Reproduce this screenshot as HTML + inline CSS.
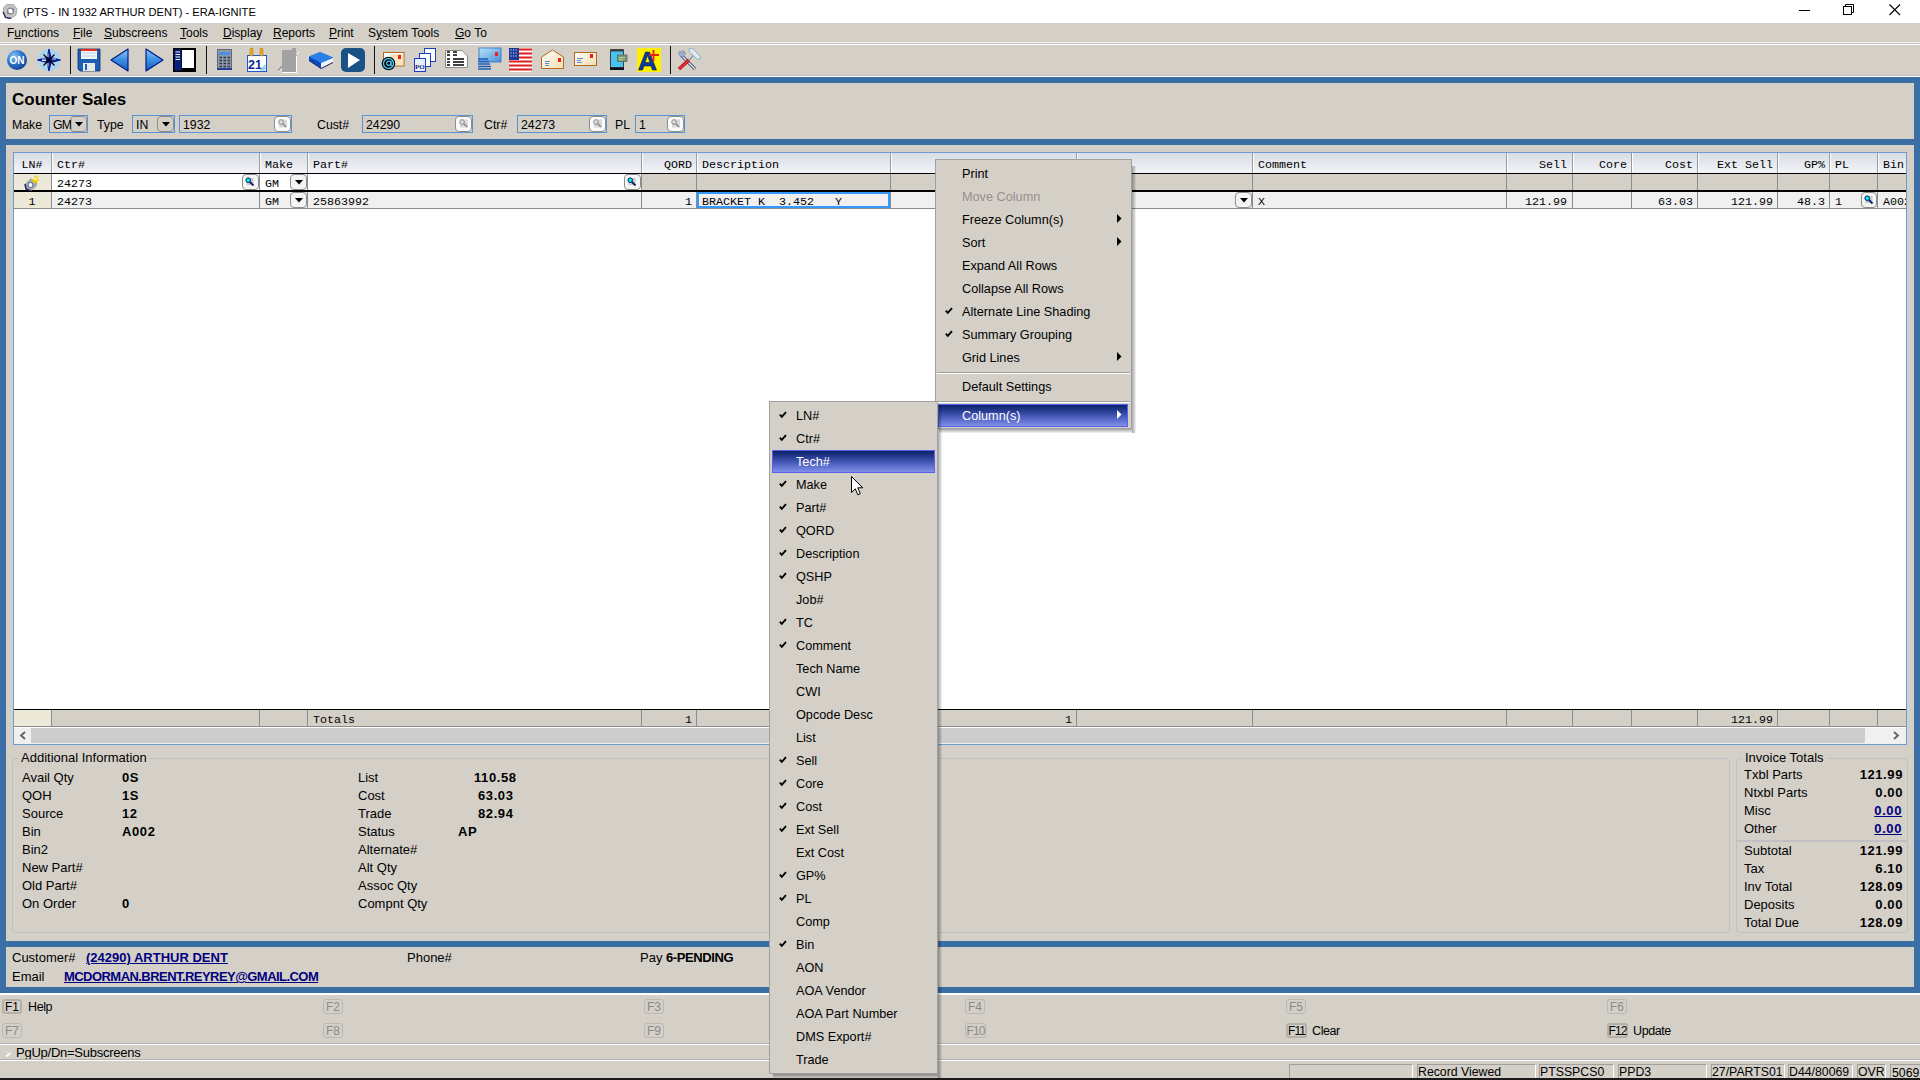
<!DOCTYPE html>
<html><head><meta charset="utf-8">
<style>
*{margin:0;padding:0;box-sizing:border-box}
html,body{width:1920px;height:1080px;overflow:hidden;background:#d4d0c8;font-family:"Liberation Sans",sans-serif;font-size:13px;color:#000}
.a{position:absolute}
.t{position:absolute;white-space:pre;line-height:1}
.mono{font-family:"Liberation Mono",monospace}
.ser{font-family:"Liberation Serif",serif;font-weight:bold}
.bl{background:#3a6ea5}
.panel{background:#d4d0c8}
u{text-decoration:underline;text-underline-offset:1px}
</style></head><body>
<!-- TITLE BAR -->
<div class="a" style="left:0;top:0;width:1920px;height:23px;background:#fff"></div>
<svg class="a" style="left:2px;top:3px" width="16" height="16" viewBox="0 0 16 16"><path d="M5 1.5L11.5 1.5L15 6L14 12L9 15.5L3.5 14.5L1 9L2 4Z" fill="#c4c4c4" stroke="#9a9a9a" stroke-width="0.8"/><path d="M1.2 9L3.5 14.5L9 15.5" fill="none" stroke="#2a2a5a" stroke-width="1.4"/><circle cx="8.5" cy="8" r="3.6" fill="#8a8a8a"/><rect x="6.5" y="6" width="4" height="4" fill="#fff"/><circle cx="11" cy="6.5" r="0.8" fill="#3a6a9a"/><circle cx="6" cy="10" r="0.8" fill="#3a6a9a"/></svg>
<div class="t" style="left:23px;top:6.5px;font-size:11.1px">(PTS - IN 1932 ARTHUR DENT) - ERA-IGNITE</div>
<div class="a" style="left:1799px;top:10px;width:11px;height:1px;background:#000"></div>
<svg class="a" style="left:1843px;top:4px" width="12" height="12" viewBox="0 0 12 12"><rect x="0.5" y="2.5" width="8" height="8" fill="none" stroke="#000"/><path d="M2.5 2.5V0.5H10.5V8.5H8.5" fill="none" stroke="#000"/></svg>
<svg class="a" style="left:1889px;top:4px" width="12" height="12" viewBox="0 0 12 12"><path d="M0.5 0.5L11 11M11 0.5L0.5 11" stroke="#000" stroke-width="1.1"/></svg>

<!-- MENU BAR -->
<div class="a" style="left:0;top:23px;width:1920px;height:19px;background:#d4d0c8"></div>
<div class="a" style="left:0;top:42px;width:1920px;height:1px;background:#f2f2f2"></div>
<div class="a" style="left:0;top:43px;width:1920px;height:1px;background:#c0c0c0"></div>
<div class="a" style="left:0;top:44px;width:1920px;height:1px;background:#fff"></div>
<div class="t" style="left:7px;top:27px;font-size:12px">F<u>u</u>nctions</div>
<div class="t" style="left:73px;top:27px;font-size:12px"><u>F</u>ile</div>
<div class="t" style="left:104px;top:27px;font-size:12px"><u>S</u>ubscreens</div>
<div class="t" style="left:180px;top:27px;font-size:12px"><u>T</u>ools</div>
<div class="t" style="left:223px;top:27px;font-size:12px"><u>D</u>isplay</div>
<div class="t" style="left:273px;top:27px;font-size:12px"><u>R</u>eports</div>
<div class="t" style="left:329px;top:27px;font-size:12px"><u>P</u>rint</div>
<div class="t" style="left:368px;top:27px;font-size:12px">S<u>y</u>stem Tools</div>
<div class="t" style="left:455px;top:27px;font-size:12px"><u>G</u>o To</div>

<!-- TOOLBAR -->
<svg class="a" style="left:0;top:44px" width="720" height="32" viewBox="0 44 720 32">
<defs>
<radialGradient id="gOn" cx="0.35" cy="0.3" r="0.8"><stop offset="0" stop-color="#8cc4f4"/><stop offset="0.5" stop-color="#2a74cc"/><stop offset="1" stop-color="#0c3c8c"/></radialGradient>
<linearGradient id="gArr" x1="0" y1="0" x2="0" y2="1"><stop offset="0" stop-color="#8cc8f8"/><stop offset="0.5" stop-color="#3c8ee0"/><stop offset="1" stop-color="#1a5cb8"/></linearGradient>
<linearGradient id="gEnv" x1="0" y1="0" x2="1" y2="1"><stop offset="0" stop-color="#fffef8"/><stop offset="1" stop-color="#f4ddb0"/></linearGradient>
<linearGradient id="gBenv" x1="0" y1="0" x2="1" y2="1"><stop offset="0" stop-color="#b8e4fc"/><stop offset="1" stop-color="#4a90d8"/></linearGradient>
</defs>
<!-- ON -->
<circle cx="17" cy="60" r="10" fill="url(#gOn)"/>
<text x="17" y="64" font-family="Liberation Sans" font-weight="bold" font-size="10" fill="#fff" text-anchor="middle">ON</text>
<!-- compass -->
<circle cx="49" cy="60" r="11" fill="#a8d4f4"/>
<path d="M49 49L51 57.5L60.5 60L51 62.5L49 71L47 62.5L37.5 60L47 57.5Z" fill="#0a1a8a" stroke="#0a1a8a" stroke-width="1"/>
<path d="M43.5 54.5L54.5 65.5M54.5 54.5L43.5 65.5" stroke="#000" stroke-width="1.2"/>
<path d="M48 53.5V57M48 63V66.5M42 59H46M52 59H56M42 60.5H46" stroke="#fff" stroke-width="0.9"/>
<rect x="70" y="46" width="1" height="28" fill="#111"/>
<!-- floppy -->
<path d="M78 49H100V71H80L78 69Z" fill="#1d5fb4" stroke="#0c2c74" stroke-width="0.8"/>
<rect x="81" y="49" width="16" height="10" fill="#f4f4f4"/>
<rect x="81" y="49" width="16" height="2" fill="#e83020"/>
<path d="M82 53H96M82 56H96" stroke="#a8c8e8" stroke-width="0.8"/>
<rect x="83" y="63" width="12" height="8" fill="#e8e8e8"/>
<rect x="85" y="64" width="2" height="6" fill="#1d5fb4"/>
<!-- left arrow -->
<path d="M111 60L128 49V71Z" fill="url(#gArr)" stroke="#001a8a" stroke-width="1.2" stroke-linejoin="round"/>
<!-- right arrow -->
<path d="M163 60L146 49V71Z" fill="url(#gArr)" stroke="#001a8a" stroke-width="1.2" stroke-linejoin="round"/>
<!-- panel book -->
<rect x="173" y="48" width="23" height="24" fill="#000"/>
<rect x="174.5" y="49.5" width="7" height="21" fill="#0a1e7c"/>
<rect x="182" y="50" width="12" height="18" fill="#fff"/>
<path d="M175.5 52H180M175.5 54.5H180M175.5 57H180M175.5 59.5H180" stroke="#fff" stroke-width="1.2"/>
<rect x="206" y="46" width="1" height="28" fill="#111"/>
<!-- calculator -->
<rect x="217" y="49" width="15" height="21" fill="#5c6a7c"/>
<rect x="218" y="50" width="13" height="19" fill="#8e9aa8"/>
<rect x="219" y="52" width="11" height="3" fill="#4a8ee0"/>
<path d="M219.5 57.5H222M223.5 57.5H226M227.5 57.5H230M219.5 60.5H222M223.5 60.5H226M227.5 60.5H230M219.5 63.5H222M223.5 63.5H226M227.5 63.5H230M219.5 66.5H222M223.5 66.5H226M227.5 66.5H230" stroke="#2a3444" stroke-width="1.6"/>
<rect x="217" y="68" width="15" height="2" fill="#2a3a9a"/>
<!-- calendar -->
<rect x="247.5" y="55.5" width="19" height="16" fill="#fff" stroke="#1a5ad0" stroke-width="1"/>
<rect x="250" y="48" width="3" height="8" rx="1.2" fill="#e8a820" stroke="#b07810" stroke-width="0.5"/>
<rect x="260" y="48" width="3" height="8" rx="1.2" fill="#e8a820" stroke="#b07810" stroke-width="0.5"/>
<text x="248" y="69" font-family="Liberation Sans" font-weight="bold" font-size="12.5" fill="#0a2a98">21</text>
<path d="M259 70.5L265.5 64V70.5Z" fill="#9cc8f0"/>
<!-- gray doc -->
<path d="M282 50H292V48H296V53L299.5 50.5V52.5L296 56V72H282Z" fill="#a2a2a2"/>
<path d="M296.5 56V72.5H282" fill="none" stroke="#fff" stroke-width="1"/>
<path d="M296.5 54.5L299.5 51.5" stroke="#fff" stroke-width="1.2"/>
<path d="M278 70.5L282 66.5" stroke="#8a8a8a" stroke-width="1.3"/>
<path d="M279 71.5L282 68.5" stroke="#fff" stroke-width="1"/>
<!-- blue book -->
<path d="M309 56.5L320 52L333 57.5L333 60L321 66L309 60Z" fill="#1a6ad8"/>
<path d="M309 56.5L320 52L333 57.5L321 63Z" fill="#2a80e8"/>
<path d="M309 57V60.5L321 68L321 63Z" fill="#0a4ab8"/>
<path d="M321 63L333 58V62L321 68Z" fill="#f4f4f8"/>
<path d="M309 60.5L321 68.5L333 62.5" fill="none" stroke="#1a1a6a" stroke-width="1"/>
<!-- play -->
<rect x="341" y="48" width="24" height="24" rx="5" fill="#1a5286"/>
<path d="M348 53L360 60L348 68Z" fill="#fff"/>
<rect x="374" y="46" width="1" height="28" fill="#111"/>
<!-- @ envelope -->
<rect x="383.5" y="52.5" width="20.5" height="13.5" fill="#fff" stroke="#b06a20" stroke-width="1"/>
<rect x="390" y="54" width="13" height="11" fill="#f8e4b8"/>
<rect x="398" y="55" width="3" height="4" fill="#e82020"/>
<circle cx="388.5" cy="63.5" r="6.8" fill="#000"/>
<circle cx="388.5" cy="63.5" r="5" fill="none" stroke="#4ac0f0" stroke-width="1.4"/>
<circle cx="388.8" cy="63.2" r="2.1" fill="none" stroke="#4ac0f0" stroke-width="1.3"/>
<path d="M391 61V65.5L393 66" fill="none" stroke="#4ac0f0" stroke-width="1.2"/>
<!-- PO -->
<rect x="424.5" y="48.5" width="11" height="13" fill="#fff" stroke="#1a40c0" stroke-width="1"/>
<rect x="419.5" y="53.5" width="11" height="13" fill="#fff" stroke="#1a40c0" stroke-width="1"/>
<rect x="414.5" y="58.5" width="11" height="13" fill="#e8f0ff" stroke="#1a40c0" stroke-width="1"/>
<text x="415" y="69" font-family="Liberation Serif" font-weight="bold" font-size="7" fill="#1a2a7a">PO</text>
<!-- text doc -->
<path d="M445.5 50.5H462L467.5 56V67.5H445.5Z" fill="#fff" stroke="#8a8a8a" stroke-width="1"/>
<path d="M447 52H450M453 52H457M447 55H450M453 55H457M447 59H450M453 59H464M447 62H450M453 62H464M447 65H450M453 65H464" stroke="#000" stroke-width="1.4"/>
<!-- blue envelope -->
<rect x="479" y="48" width="22" height="14" fill="url(#gBenv)" stroke="#2a70c0" stroke-width="0.8"/>
<rect x="495" y="52" width="3" height="4" fill="#e82020"/>
<path d="M478 59H488M478 61.5H489M478 64H490M478 66.5H491M478 69H491" stroke="#1a5ab8" stroke-width="1.3"/>
<!-- flag -->
<rect x="509" y="48" width="23" height="24" rx="2" fill="#fff"/>
<path d="M509 49.5H532M509 53.5H532M509 57.5H532M509 61.5H532M509 65.5H532M509 69.5H532" stroke="#e02020" stroke-width="2"/>
<rect x="509" y="48" width="10" height="12" fill="#1a3a9a"/>
<path d="M510.5 50H518M510.5 53H518M510.5 56H518" stroke="#fff" stroke-width="0.9" stroke-dasharray="1.2 1.3"/>
<!-- open envelope -->
<path d="M541.5 57L552.5 50L563.5 57V68.5H541.5Z" fill="url(#gEnv)" stroke="#b06a20" stroke-width="1"/>
<rect x="558" y="58" width="3" height="4" fill="#e82020"/>
<path d="M545 61.5H550M545 63.5H549M545 65.5H549" stroke="#4a80d0" stroke-width="0.9"/>
<!-- envelope -->
<rect x="574.5" y="52.5" width="22" height="13" fill="url(#gEnv)" stroke="#b06a20" stroke-width="1"/>
<rect x="590" y="54" width="3" height="4" fill="#e82020"/>
<path d="M577 58.5H583M577 60.5H581M577 62.5H582" stroke="#4a80d0" stroke-width="0.9"/>
<!-- tablet -->
<rect x="610" y="49" width="14" height="21" rx="1" fill="#404040"/>
<rect x="611" y="51.5" width="12" height="15.5" fill="#48c4f0"/>
<rect x="610" y="67.5" width="14" height="2.5" fill="#101018"/>
<rect x="617.5" y="55" width="9.5" height="6.5" fill="#7a9a6a" stroke="#606860" stroke-width="0.8"/>
<path d="M619 57.5H625M619 59.5H623" stroke="#c8d8b8" stroke-width="0.8"/>
<!-- A+ -->
<rect x="637" y="48" width="24" height="24" fill="#fff000"/>
<path d="M638.5 70L645.5 52H649.5L656.5 70H652.5L651 66H644L642.5 70ZM645 62.5H650L647.5 55.5Z" fill="#0a3a9a" stroke="#001040" stroke-width="0.5"/>
<path d="M653.5 50V61M649 55H659" stroke="#e82020" stroke-width="1.8"/>
<rect x="670" y="46" width="1" height="28" fill="#111"/>
<!-- tools -->
<path d="M681 55L695 69" stroke="#1a2a5a" stroke-width="3"/>
<path d="M681 55L695 69" stroke="#e8f0f8" stroke-width="1.4"/>
<path d="M678.5 53.5L680 51L682.5 53.5L683.5 52L682 50.5L684 51L685.5 53.5L683.5 56.5L680.5 56.5Z" fill="#9ab0d0" stroke="#6a80a8" stroke-width="0.6"/>
<path d="M679 69L689 60" stroke="#a01010" stroke-width="3.4"/>
<path d="M679 69L689 60" stroke="#e83030" stroke-width="2"/>
<path d="M689 60L694 55" stroke="#8a9ab8" stroke-width="1.4"/>
<path d="M689 49L692 48L700 56L700.5 59L697.5 59.5L689.5 52Z" fill="#e0e8f0" stroke="#8aa0c0" stroke-width="0.8"/>
</svg>

<div class="a" style="left:0;top:75px;width:1920px;height:1px;background:#c0c0c0"></div>
<div class="a" style="left:0;top:76px;width:1920px;height:1px;background:#fff"></div>

<!-- BLUE FRAME -->
<div class="a bl" style="left:0;top:77px;width:1920px;height:916px"></div>
<div class="a panel" style="left:6px;top:83px;width:1908px;height:56px"></div>
<div class="a panel" style="left:6px;top:145px;width:1908px;height:796px"></div>
<div class="a panel" style="left:6px;top:947px;width:1908px;height:40px"></div>
<div class="a" style="left:0;top:993px;width:1920px;height:1px;background:#fff"></div>

<!-- HEADER PANEL -->
<div class="t" style="left:12px;top:91px;font-size:17px;font-weight:bold">Counter Sales</div>
<div class="t" style="left:12px;top:119px;font-size:12.3px;">Make</div>
<div class="a" style="left:49px;top:115px;width:39px;height:18px;border:1px solid #5a94d0;background:#d4d0c8"></div>
<div class="a" style="left:70px;top:116px;width:17px;height:16px;border:1px solid #8c8c8c;border-radius:4px;background:#d4d0c8"></div>
<svg class="a" style="left:74.5px;top:122px" width="8" height="5" viewBox="0 0 8 5"><path d="M0 0H8L4 4.5Z" fill="#000"/></svg>
<div class="t" style="left:53px;top:119px;font-size:12.3px;letter-spacing:-0.9px">GM</div>
<div class="t" style="left:97px;top:119px;font-size:12.3px;">Type</div>
<div class="a" style="left:132px;top:115px;width:43px;height:18px;border:1px solid #5a94d0;background:#d4d0c8"></div>
<div class="a" style="left:157px;top:116px;width:17px;height:16px;border:1px solid #8c8c8c;border-radius:4px;background:#d4d0c8"></div>
<svg class="a" style="left:161.5px;top:122px" width="8" height="5" viewBox="0 0 8 5"><path d="M0 0H8L4 4.5Z" fill="#000"/></svg>
<div class="t" style="left:136px;top:119px;font-size:12.3px;">IN</div>
<div class="a" style="left:179px;top:115px;width:113px;height:18px;border:1px solid #5a94d0;background:#d4d0c8"></div>
<div class="t" style="left:183px;top:119px;font-size:12.3px;">1932</div>
<div class="a" style="left:274px;top:116px;width:17px;height:16px;border:1px solid #8c8c8c;border-radius:4px;background:#fafafa"></div>
<svg class="a" style="left:278px;top:119px" width="9" height="9" viewBox="0 0 9 9"><rect x="1" y="0.5" width="8" height="8" fill="#d8d8d8"/><circle cx="3" cy="3" r="2.3" fill="#e0e0e0" stroke="#8a8a8a" stroke-width="1"/><path d="M4.8 4.8L8 8" stroke="#8a8a8a" stroke-width="1.6"/></svg>
<div class="t" style="left:317px;top:119px;font-size:12.3px;">Cust#</div>
<div class="a" style="left:362px;top:115px;width:111px;height:18px;border:1px solid #5a94d0;background:#d4d0c8"></div>
<div class="t" style="left:366px;top:119px;font-size:12.3px;">24290</div>
<div class="a" style="left:455px;top:116px;width:17px;height:16px;border:1px solid #8c8c8c;border-radius:4px;background:#fafafa"></div>
<svg class="a" style="left:459px;top:119px" width="9" height="9" viewBox="0 0 9 9"><rect x="1" y="0.5" width="8" height="8" fill="#d8d8d8"/><circle cx="3" cy="3" r="2.3" fill="#e0e0e0" stroke="#8a8a8a" stroke-width="1"/><path d="M4.8 4.8L8 8" stroke="#8a8a8a" stroke-width="1.6"/></svg>
<div class="t" style="left:484px;top:119px;font-size:12.3px;">Ctr#</div>
<div class="a" style="left:517px;top:115px;width:90px;height:18px;border:1px solid #5a94d0;background:#d4d0c8"></div>
<div class="t" style="left:521px;top:119px;font-size:12.3px;">24273</div>
<div class="a" style="left:589px;top:116px;width:17px;height:16px;border:1px solid #8c8c8c;border-radius:4px;background:#fafafa"></div>
<svg class="a" style="left:593px;top:119px" width="9" height="9" viewBox="0 0 9 9"><rect x="1" y="0.5" width="8" height="8" fill="#d8d8d8"/><circle cx="3" cy="3" r="2.3" fill="#e0e0e0" stroke="#8a8a8a" stroke-width="1"/><path d="M4.8 4.8L8 8" stroke="#8a8a8a" stroke-width="1.6"/></svg>
<div class="t" style="left:615px;top:119px;font-size:12.3px;">PL</div>
<div class="a" style="left:635px;top:115px;width:50px;height:18px;border:1px solid #5a94d0;background:#d4d0c8"></div>
<div class="t" style="left:639px;top:119px;font-size:12.3px;">1</div>
<div class="a" style="left:667px;top:116px;width:17px;height:16px;border:1px solid #8c8c8c;border-radius:4px;background:#fafafa"></div>
<svg class="a" style="left:671px;top:119px" width="9" height="9" viewBox="0 0 9 9"><rect x="1" y="0.5" width="8" height="8" fill="#d8d8d8"/><circle cx="3" cy="3" r="2.3" fill="#e0e0e0" stroke="#8a8a8a" stroke-width="1"/><path d="M4.8 4.8L8 8" stroke="#8a8a8a" stroke-width="1.6"/></svg>
<!-- GRID -->
<div class="a" style="left:13px;top:152px;width:1894px;height:593px;background:#fff;"></div>
<div class="a" style="left:13px;top:152px;width:1894px;height:1px;background:#6d9dd0;"></div>
<div class="a" style="left:13px;top:152px;width:1px;height:593px;background:#6d9dd0;"></div>
<div class="a" style="left:1906px;top:152px;width:1px;height:593px;background:#6d9dd0;"></div>
<div class="a" style="left:13px;top:744px;width:1894px;height:1px;background:#6d9dd0;"></div>
<div class="a" style="left:14px;top:153px;width:1892px;height:20px;background:linear-gradient(#d8dde6,#f3f4f7);"></div>
<div class="a" style="left:14px;top:173px;width:1892px;height:1px;background:#000;"></div>
<div class="a" style="left:14px;top:174px;width:1892px;height:16px;background:#d4d0c8;"></div>
<div class="a" style="left:14px;top:174px;width:37px;height:16px;background:#ece9d8;"></div>
<div class="a" style="left:52px;top:174px;width:589px;height:16px;background:#fff;"></div>
<div class="a" style="left:14px;top:190px;width:1892px;height:2px;background:#000;"></div>
<div class="a" style="left:14px;top:192px;width:1892px;height:16px;background:#f0f0f0;"></div>
<div class="a" style="left:14px;top:192px;width:37px;height:16px;background:#ece9d8;"></div>
<div class="a" style="left:14px;top:208px;width:1892px;height:1px;background:#8c8c8c;"></div>
<div class="a" style="left:14px;top:709px;width:1892px;height:1px;background:#000;"></div>
<div class="a" style="left:14px;top:710px;width:1892px;height:16px;background:#d4d0c8;"></div>
<div class="a" style="left:14px;top:710px;width:37px;height:16px;background:#ece9d8;"></div>
<div class="a" style="left:14px;top:726px;width:1892px;height:1px;background:#8c8c8c;"></div>
<div class="a" style="left:14px;top:727px;width:1892px;height:1px;background:#fff;"></div>
<div class="a" style="left:14px;top:728px;width:1892px;height:16px;background:#f0f0f0;"></div>
<div class="a" style="left:31px;top:728px;width:1834px;height:15px;background:#cdcdcd;"></div>
<svg class="a" style="left:19px;top:731px" width="8" height="9" viewBox="0 0 8 9"><path d="M6 1L2 4.5L6 8" fill="none" stroke="#606060" stroke-width="1.8"/></svg>
<svg class="a" style="left:1892px;top:731px" width="8" height="9" viewBox="0 0 8 9"><path d="M2 1L6 4.5L2 8" fill="none" stroke="#606060" stroke-width="1.8"/></svg>
<div class="a" style="left:51px;top:153px;width:1px;height:20px;background:#9a9a9a;"></div>
<div class="a" style="left:52px;top:153px;width:1px;height:20px;background:#fff;"></div>
<div class="a" style="left:51px;top:174px;width:1px;height:16px;background:#8c8c8c;"></div>
<div class="a" style="left:51px;top:192px;width:1px;height:16px;background:#8c8c8c;"></div>
<div class="a" style="left:51px;top:710px;width:1px;height:16px;background:#8c8c8c;"></div>
<div class="a" style="left:259px;top:153px;width:1px;height:20px;background:#9a9a9a;"></div>
<div class="a" style="left:260px;top:153px;width:1px;height:20px;background:#fff;"></div>
<div class="a" style="left:259px;top:174px;width:1px;height:16px;background:#8c8c8c;"></div>
<div class="a" style="left:259px;top:192px;width:1px;height:16px;background:#8c8c8c;"></div>
<div class="a" style="left:259px;top:710px;width:1px;height:16px;background:#8c8c8c;"></div>
<div class="a" style="left:307px;top:153px;width:1px;height:20px;background:#9a9a9a;"></div>
<div class="a" style="left:308px;top:153px;width:1px;height:20px;background:#fff;"></div>
<div class="a" style="left:307px;top:174px;width:1px;height:16px;background:#8c8c8c;"></div>
<div class="a" style="left:307px;top:192px;width:1px;height:16px;background:#8c8c8c;"></div>
<div class="a" style="left:307px;top:710px;width:1px;height:16px;background:#8c8c8c;"></div>
<div class="a" style="left:641px;top:153px;width:1px;height:20px;background:#9a9a9a;"></div>
<div class="a" style="left:642px;top:153px;width:1px;height:20px;background:#fff;"></div>
<div class="a" style="left:641px;top:174px;width:1px;height:16px;background:#8c8c8c;"></div>
<div class="a" style="left:641px;top:192px;width:1px;height:16px;background:#8c8c8c;"></div>
<div class="a" style="left:641px;top:710px;width:1px;height:16px;background:#8c8c8c;"></div>
<div class="a" style="left:696px;top:153px;width:1px;height:20px;background:#9a9a9a;"></div>
<div class="a" style="left:697px;top:153px;width:1px;height:20px;background:#fff;"></div>
<div class="a" style="left:696px;top:174px;width:1px;height:16px;background:#8c8c8c;"></div>
<div class="a" style="left:696px;top:192px;width:1px;height:16px;background:#8c8c8c;"></div>
<div class="a" style="left:696px;top:710px;width:1px;height:16px;background:#8c8c8c;"></div>
<div class="a" style="left:890px;top:153px;width:1px;height:20px;background:#9a9a9a;"></div>
<div class="a" style="left:891px;top:153px;width:1px;height:20px;background:#fff;"></div>
<div class="a" style="left:890px;top:174px;width:1px;height:16px;background:#8c8c8c;"></div>
<div class="a" style="left:890px;top:192px;width:1px;height:16px;background:#8c8c8c;"></div>
<div class="a" style="left:890px;top:710px;width:1px;height:16px;background:#8c8c8c;"></div>
<div class="a" style="left:1076px;top:153px;width:1px;height:20px;background:#9a9a9a;"></div>
<div class="a" style="left:1077px;top:153px;width:1px;height:20px;background:#fff;"></div>
<div class="a" style="left:1076px;top:174px;width:1px;height:16px;background:#8c8c8c;"></div>
<div class="a" style="left:1076px;top:192px;width:1px;height:16px;background:#8c8c8c;"></div>
<div class="a" style="left:1076px;top:710px;width:1px;height:16px;background:#8c8c8c;"></div>
<div class="a" style="left:1252px;top:153px;width:1px;height:20px;background:#9a9a9a;"></div>
<div class="a" style="left:1253px;top:153px;width:1px;height:20px;background:#fff;"></div>
<div class="a" style="left:1252px;top:174px;width:1px;height:16px;background:#8c8c8c;"></div>
<div class="a" style="left:1252px;top:192px;width:1px;height:16px;background:#8c8c8c;"></div>
<div class="a" style="left:1252px;top:710px;width:1px;height:16px;background:#8c8c8c;"></div>
<div class="a" style="left:1506px;top:153px;width:1px;height:20px;background:#9a9a9a;"></div>
<div class="a" style="left:1507px;top:153px;width:1px;height:20px;background:#fff;"></div>
<div class="a" style="left:1506px;top:174px;width:1px;height:16px;background:#8c8c8c;"></div>
<div class="a" style="left:1506px;top:192px;width:1px;height:16px;background:#8c8c8c;"></div>
<div class="a" style="left:1506px;top:710px;width:1px;height:16px;background:#8c8c8c;"></div>
<div class="a" style="left:1572px;top:153px;width:1px;height:20px;background:#9a9a9a;"></div>
<div class="a" style="left:1573px;top:153px;width:1px;height:20px;background:#fff;"></div>
<div class="a" style="left:1572px;top:174px;width:1px;height:16px;background:#8c8c8c;"></div>
<div class="a" style="left:1572px;top:192px;width:1px;height:16px;background:#8c8c8c;"></div>
<div class="a" style="left:1572px;top:710px;width:1px;height:16px;background:#8c8c8c;"></div>
<div class="a" style="left:1631px;top:153px;width:1px;height:20px;background:#9a9a9a;"></div>
<div class="a" style="left:1632px;top:153px;width:1px;height:20px;background:#fff;"></div>
<div class="a" style="left:1631px;top:174px;width:1px;height:16px;background:#8c8c8c;"></div>
<div class="a" style="left:1631px;top:192px;width:1px;height:16px;background:#8c8c8c;"></div>
<div class="a" style="left:1631px;top:710px;width:1px;height:16px;background:#8c8c8c;"></div>
<div class="a" style="left:1697px;top:153px;width:1px;height:20px;background:#9a9a9a;"></div>
<div class="a" style="left:1698px;top:153px;width:1px;height:20px;background:#fff;"></div>
<div class="a" style="left:1697px;top:174px;width:1px;height:16px;background:#8c8c8c;"></div>
<div class="a" style="left:1697px;top:192px;width:1px;height:16px;background:#8c8c8c;"></div>
<div class="a" style="left:1697px;top:710px;width:1px;height:16px;background:#8c8c8c;"></div>
<div class="a" style="left:1777px;top:153px;width:1px;height:20px;background:#9a9a9a;"></div>
<div class="a" style="left:1778px;top:153px;width:1px;height:20px;background:#fff;"></div>
<div class="a" style="left:1777px;top:174px;width:1px;height:16px;background:#8c8c8c;"></div>
<div class="a" style="left:1777px;top:192px;width:1px;height:16px;background:#8c8c8c;"></div>
<div class="a" style="left:1777px;top:710px;width:1px;height:16px;background:#8c8c8c;"></div>
<div class="a" style="left:1829px;top:153px;width:1px;height:20px;background:#9a9a9a;"></div>
<div class="a" style="left:1830px;top:153px;width:1px;height:20px;background:#fff;"></div>
<div class="a" style="left:1829px;top:174px;width:1px;height:16px;background:#8c8c8c;"></div>
<div class="a" style="left:1829px;top:192px;width:1px;height:16px;background:#8c8c8c;"></div>
<div class="a" style="left:1829px;top:710px;width:1px;height:16px;background:#8c8c8c;"></div>
<div class="a" style="left:1877px;top:153px;width:1px;height:20px;background:#9a9a9a;"></div>
<div class="a" style="left:1878px;top:153px;width:1px;height:20px;background:#fff;"></div>
<div class="a" style="left:1877px;top:174px;width:1px;height:16px;background:#8c8c8c;"></div>
<div class="a" style="left:1877px;top:192px;width:1px;height:16px;background:#8c8c8c;"></div>
<div class="a" style="left:1877px;top:710px;width:1px;height:16px;background:#8c8c8c;"></div>
<div class="t mono" style="left:-18px;width:100px;text-align:center;top:160px;font-size:11.67px;">LN#</div>
<div class="t mono" style="left:57px;top:160px;font-size:11.67px;">Ctr#</div>
<div class="t mono" style="left:265px;top:160px;font-size:11.67px;">Make</div>
<div class="t mono" style="left:313px;top:160px;font-size:11.67px;">Part#</div>
<div class="t mono" style="right:1228px;top:160px;font-size:11.67px;">QORD</div>
<div class="t mono" style="left:702px;top:160px;font-size:11.67px;">Description</div>
<div class="t mono" style="left:1258px;top:160px;font-size:11.67px;">Comment</div>
<div class="t mono" style="right:353px;top:160px;font-size:11.67px;">Sell</div>
<div class="t mono" style="right:293px;top:160px;font-size:11.67px;">Core</div>
<div class="t mono" style="right:227px;top:160px;font-size:11.67px;">Cost</div>
<div class="t mono" style="right:147px;top:160px;font-size:11.67px;">Ext Sell</div>
<div class="t mono" style="right:95px;top:160px;font-size:11.67px;">GP%</div>
<div class="t mono" style="left:1835px;top:160px;font-size:11.67px;">PL</div>
<div class="t mono" style="left:1883px;top:160px;font-size:11.67px;">Bin</div>
<div class="t mono" style="left:57px;top:179px;font-size:11.67px;">24273</div>
<div class="a" style="left:242px;top:174px;width:17px;height:16px;border:1px solid #8c8c8c;border-radius:4px;background:#f6f6f4"></div>
<svg class="a" style="left:245px;top:177px" width="10" height="10" viewBox="0 0 10 10"><rect x="1.5" y="1" width="7" height="7" fill="#c8c8c8"/><path d="M4.8 4.8L8.5 8.5" stroke="#0a1a6a" stroke-width="1.8"/><circle cx="3.2" cy="3.2" r="2.3" fill="#00f0f0" stroke="#0a1a6a" stroke-width="1"/></svg>
<div class="t mono" style="left:265px;top:179px;font-size:11.67px;">GM</div>
<div class="a" style="left:290px;top:174px;width:17px;height:16px;border:1px solid #8c8c8c;border-radius:4px;background:#f4f4f2"></div>
<svg class="a" style="left:294.5px;top:180px" width="8" height="5" viewBox="0 0 8 5"><path d="M0 0H8L4 4.5Z" fill="#000"/></svg>
<div class="a" style="left:624px;top:174px;width:17px;height:16px;border:1px solid #8c8c8c;border-radius:4px;background:#f6f6f4"></div>
<svg class="a" style="left:627px;top:177px" width="10" height="10" viewBox="0 0 10 10"><rect x="1.5" y="1" width="7" height="7" fill="#c8c8c8"/><path d="M4.8 4.8L8.5 8.5" stroke="#0a1a6a" stroke-width="1.8"/><circle cx="3.2" cy="3.2" r="2.3" fill="#00f0f0" stroke="#0a1a6a" stroke-width="1"/></svg>
<svg class="a" style="left:23px;top:174px" width="18" height="17" viewBox="0 0 18 17"><path d="M2 10L8 4L14 8L14 12L8 17L3 15Z" fill="#a8a8a8"/><path d="M2 10L3 15L8 17" fill="none" stroke="#2a2a6a" stroke-width="1.6"/><circle cx="7.5" cy="11" r="2.5" fill="#fff" stroke="#3a6a9a" stroke-width="1"/><path d="M12 0L13 3L16 2L14 5L17 6L14 7L15 10L12 8L10 10L10 7L8 5L11 5Z" fill="#f0d000"/><circle cx="12.5" cy="5" r="1.3" fill="#fff8c0"/></svg>
<div class="t mono" style="left:-18px;width:100px;text-align:center;top:197px;font-size:11.67px;">1</div>
<div class="t mono" style="left:57px;top:197px;font-size:11.67px;">24273</div>
<div class="t mono" style="left:265px;top:197px;font-size:11.67px;">GM</div>
<div class="a" style="left:290px;top:192px;width:17px;height:16px;border:1px solid #8c8c8c;border-radius:4px;background:#f4f4f2"></div>
<svg class="a" style="left:294.5px;top:198px" width="8" height="5" viewBox="0 0 8 5"><path d="M0 0H8L4 4.5Z" fill="#000"/></svg>
<div class="t mono" style="left:313px;top:197px;font-size:11.67px;">25863992</div>
<div class="t mono" style="right:1228px;top:197px;font-size:11.67px;">1</div>
<div class="a" style="left:697px;top:192px;width:193px;height:16px;background:transparent;border:2px solid #3399ff"></div>
<div class="t mono" style="left:702px;top:197px;font-size:11.67px;">BRACKET K  3.452   Y</div>
<div class="a" style="left:1235px;top:192px;width:17px;height:16px;border:1px solid #8c8c8c;border-radius:4px;background:#f4f4f2"></div>
<svg class="a" style="left:1239.5px;top:198px" width="8" height="5" viewBox="0 0 8 5"><path d="M0 0H8L4 4.5Z" fill="#000"/></svg>
<div class="t mono" style="left:1258px;top:197px;font-size:11.67px;">X</div>
<div class="t mono" style="right:353px;top:197px;font-size:11.67px;">121.99</div>
<div class="t mono" style="right:227px;top:197px;font-size:11.67px;">63.03</div>
<div class="t mono" style="right:147px;top:197px;font-size:11.67px;">121.99</div>
<div class="t mono" style="right:95px;top:197px;font-size:11.67px;">48.3</div>
<div class="t mono" style="left:1835px;top:197px;font-size:11.67px;">1</div>
<div class="a" style="left:1861px;top:192px;width:16px;height:16px;border:1px solid #8c8c8c;border-radius:4px;background:#f4f4f2"></div>
<svg class="a" style="left:1864px;top:195px" width="10" height="10" viewBox="0 0 10 10"><rect x="1.5" y="1" width="7" height="7" fill="#c8c8c8"/><path d="M4.8 4.8L8.5 8.5" stroke="#0a1a6a" stroke-width="1.8"/><circle cx="3.2" cy="3.2" r="2.3" fill="#00f0f0" stroke="#0a1a6a" stroke-width="1"/></svg>
<div class="t mono" style="left:1883px;top:197px;font-size:11.67px;width:23px;overflow:hidden">A002</div>
<div class="t mono" style="left:313px;top:715px;font-size:11.67px;">Totals</div>
<div class="t mono" style="right:1228px;top:715px;font-size:11.67px;">1</div>
<div class="t mono" style="right:848px;top:715px;font-size:11.67px;">1</div>
<div class="t mono" style="right:147px;top:715px;font-size:11.67px;">121.99</div>
<!-- INFO -->
<div class="a" style="left:12px;top:758px;width:1718px;height:175px;border:1px solid #bfc0c4;border-radius:4px"></div>
<div class="a" style="left:19px;top:755px;width:130px;height:6px;background:#d4d0c8;"></div>
<div class="t" style="left:21px;top:751.2px;font-size:13px;">Additional Information</div>
<div class="a" style="left:1736px;top:758px;width:172px;height:175px;border:1px solid #bfc0c4;border-radius:4px"></div>
<div class="a" style="left:1743px;top:755px;width:84px;height:6px;background:#d4d0c8;"></div>
<div class="t" style="left:1745px;top:751.2px;font-size:13px;">Invoice Totals</div>
<div class="a" style="left:1737px;top:840px;width:170px;height:2px;background:#c0c0c4;"></div>
<div class="t" style="left:22px;top:771.2px;font-size:13px;">Avail Qty</div>
<div class="t" style="left:122px;top:771.2px;font-size:13px;font-weight:bold;letter-spacing:0.6px">0S</div>
<div class="t" style="left:358px;top:771.2px;font-size:13px;">List</div>
<div class="t" style="left:22px;top:789.2px;font-size:13px;">QOH</div>
<div class="t" style="left:122px;top:789.2px;font-size:13px;font-weight:bold;letter-spacing:0.6px">1S</div>
<div class="t" style="left:358px;top:789.2px;font-size:13px;">Cost</div>
<div class="t" style="left:22px;top:807.2px;font-size:13px;">Source</div>
<div class="t" style="left:122px;top:807.2px;font-size:13px;font-weight:bold;letter-spacing:0.6px">12</div>
<div class="t" style="left:358px;top:807.2px;font-size:13px;">Trade</div>
<div class="t" style="left:22px;top:825.2px;font-size:13px;">Bin</div>
<div class="t" style="left:122px;top:825.2px;font-size:13px;font-weight:bold;letter-spacing:0.6px">A002</div>
<div class="t" style="left:358px;top:825.2px;font-size:13px;">Status</div>
<div class="t" style="left:22px;top:843.2px;font-size:13px;">Bin2</div>
<div class="t" style="left:358px;top:843.2px;font-size:13px;">Alternate#</div>
<div class="t" style="left:22px;top:861.2px;font-size:13px;">New Part#</div>
<div class="t" style="left:358px;top:861.2px;font-size:13px;">Alt Qty</div>
<div class="t" style="left:22px;top:879.2px;font-size:13px;">Old Part#</div>
<div class="t" style="left:358px;top:879.2px;font-size:13px;">Assoc Qty</div>
<div class="t" style="left:22px;top:897.2px;font-size:13px;">On Order</div>
<div class="t" style="left:122px;top:897.2px;font-size:13px;font-weight:bold;letter-spacing:0.6px">0</div>
<div class="t" style="left:358px;top:897.2px;font-size:13px;">Compnt Qty</div>
<div class="t" style="left:474px;top:771.2px;font-size:13px;font-weight:bold;letter-spacing:0.6px">110.58</div>
<div class="t" style="left:478px;top:789.2px;font-size:13px;font-weight:bold;letter-spacing:0.6px">63.03</div>
<div class="t" style="left:478px;top:807.2px;font-size:13px;font-weight:bold;letter-spacing:0.6px">82.94</div>
<div class="t" style="left:458px;top:825.2px;font-size:13px;font-weight:bold;letter-spacing:0.6px">AP</div>
<div class="t" style="left:1744px;top:768.2px;font-size:13px;">Txbl Parts</div>
<div class="t" style="right:17px;top:768.2px;font-size:13px;font-weight:bold;letter-spacing:0.6px">121.99</div>
<div class="t" style="left:1744px;top:786.2px;font-size:13px;">Ntxbl Parts</div>
<div class="t" style="right:17px;top:786.2px;font-size:13px;font-weight:bold;letter-spacing:0.6px">0.00</div>
<div class="t" style="left:1744px;top:804.2px;font-size:13px;">Misc</div>
<div class="t" style="right:18px;top:804.2px;font-size:13px;font-weight:bold;letter-spacing:0.6px;color:#000080;text-decoration:underline">0.00</div>
<div class="t" style="left:1744px;top:822.2px;font-size:13px;">Other</div>
<div class="t" style="right:18px;top:822.2px;font-size:13px;font-weight:bold;letter-spacing:0.6px;color:#000080;text-decoration:underline">0.00</div>
<div class="t" style="left:1744px;top:844.2px;font-size:13px;">Subtotal</div>
<div class="t" style="right:17px;top:844.2px;font-size:13px;font-weight:bold;letter-spacing:0.6px">121.99</div>
<div class="t" style="left:1744px;top:862.2px;font-size:13px;">Tax</div>
<div class="t" style="right:17px;top:862.2px;font-size:13px;font-weight:bold;letter-spacing:0.6px">6.10</div>
<div class="t" style="left:1744px;top:880.2px;font-size:13px;">Inv Total</div>
<div class="t" style="right:17px;top:880.2px;font-size:13px;font-weight:bold;letter-spacing:0.6px">128.09</div>
<div class="t" style="left:1744px;top:898.2px;font-size:13px;">Deposits</div>
<div class="t" style="right:17px;top:898.2px;font-size:13px;font-weight:bold;letter-spacing:0.6px">0.00</div>
<div class="t" style="left:1744px;top:916.2px;font-size:13px;">Total Due</div>
<div class="t" style="right:17px;top:916.2px;font-size:13px;font-weight:bold;letter-spacing:0.6px">128.09</div>
<div class="t" style="left:12px;top:951.2px;font-size:13px;">Customer#</div>
<div class="t" style="left:86px;top:951.2px;font-size:13px;font-weight:bold;color:#000080;text-decoration:underline">(24290) ARTHUR DENT</div>
<div class="t" style="left:407px;top:951.2px;font-size:13px;">Phone#</div>
<div class="t" style="left:640px;top:951.2px;font-size:13px;">Pay</div>
<div class="t" style="left:666px;top:951.2px;font-size:13px;font-weight:bold;letter-spacing:-0.4px">6-PENDING</div>
<div class="t" style="left:12px;top:970.2px;font-size:13px;">Email</div>
<div class="t" style="left:64px;top:970.2px;font-size:13px;font-weight:bold;color:#000080;text-decoration:underline;letter-spacing:-0.55px">MCDORMAN.BRENT.REYREY@GMAIL.COM</div>
<div class="a" style="left:0px;top:993px;width:1920px;height:2px;background:#fff;"></div>
<div class="a" style="left:2px;top:999px;width:20px;height:15px;border:2px solid #b4b0a8;border-radius:3px"></div>
<div class="t" style="left:2px;width:20px;text-align:center;top:1000.5px;font-size:12px;color:#000;letter-spacing:0px">F1</div>
<div class="t" style="left:28px;top:1001.2px;font-size:12.5px;letter-spacing:-0.4px">Help</div>
<div class="a" style="left:323px;top:999px;width:20px;height:15px;border:1px solid #bcb8b0;border-radius:3px"></div>
<div class="t" style="left:323px;width:20px;text-align:center;top:1000.5px;font-size:12px;color:#8a8a8a;letter-spacing:0px">F2</div>
<div class="a" style="left:644px;top:999px;width:20px;height:15px;border:1px solid #bcb8b0;border-radius:3px"></div>
<div class="t" style="left:644px;width:20px;text-align:center;top:1000.5px;font-size:12px;color:#8a8a8a;letter-spacing:0px">F3</div>
<div class="a" style="left:965px;top:999px;width:20px;height:15px;border:1px solid #bcb8b0;border-radius:3px"></div>
<div class="t" style="left:965px;width:20px;text-align:center;top:1000.5px;font-size:12px;color:#8a8a8a;letter-spacing:0px">F4</div>
<div class="a" style="left:1286px;top:999px;width:20px;height:15px;border:1px solid #bcb8b0;border-radius:3px"></div>
<div class="t" style="left:1286px;width:20px;text-align:center;top:1000.5px;font-size:12px;color:#8a8a8a;letter-spacing:0px">F5</div>
<div class="a" style="left:1607px;top:999px;width:20px;height:15px;border:1px solid #bcb8b0;border-radius:3px"></div>
<div class="t" style="left:1607px;width:20px;text-align:center;top:1000.5px;font-size:12px;color:#8a8a8a;letter-spacing:0px">F6</div>
<div class="a" style="left:2px;top:1023px;width:20px;height:15px;border:1px solid #bcb8b0;border-radius:3px"></div>
<div class="t" style="left:2px;width:20px;text-align:center;top:1024.5px;font-size:12px;color:#8a8a8a;letter-spacing:0px">F7</div>
<div class="a" style="left:323px;top:1023px;width:20px;height:15px;border:1px solid #bcb8b0;border-radius:3px"></div>
<div class="t" style="left:323px;width:20px;text-align:center;top:1024.5px;font-size:12px;color:#8a8a8a;letter-spacing:0px">F8</div>
<div class="a" style="left:644px;top:1023px;width:20px;height:15px;border:1px solid #bcb8b0;border-radius:3px"></div>
<div class="t" style="left:644px;width:20px;text-align:center;top:1024.5px;font-size:12px;color:#8a8a8a;letter-spacing:0px">F9</div>
<div class="a" style="left:965px;top:1023px;width:21px;height:15px;border:1px solid #bcb8b0;border-radius:3px"></div>
<div class="t" style="left:965px;width:21px;text-align:center;top:1024.5px;font-size:12px;color:#8a8a8a;letter-spacing:-0.9px">F10</div>
<div class="a" style="left:1286px;top:1023px;width:21px;height:15px;border:2px solid #b4b0a8;border-radius:3px"></div>
<div class="t" style="left:1286px;width:21px;text-align:center;top:1024.5px;font-size:12px;color:#000;letter-spacing:-0.9px">F11</div>
<div class="t" style="left:1312px;top:1025.2px;font-size:12.5px;letter-spacing:-0.4px">Clear</div>
<div class="a" style="left:1607px;top:1023px;width:21px;height:15px;border:2px solid #b4b0a8;border-radius:3px"></div>
<div class="t" style="left:1607px;width:21px;text-align:center;top:1024.5px;font-size:12px;color:#000;letter-spacing:-0.9px">F12</div>
<div class="t" style="left:1633px;top:1025.2px;font-size:12.5px;letter-spacing:-0.4px">Update</div>
<div class="a" style="left:0px;top:1043px;width:1920px;height:1px;background:#b0b0b0;"></div>
<div class="a" style="left:0px;top:1044px;width:1920px;height:1px;background:#fff;"></div>
<svg class="a" style="left:4px;top:1049px" width="8" height="9" viewBox="0 0 8 9"><path d="M2 1.5L6 4.5L2 7.5" fill="none" stroke="#fff" stroke-width="1.6"/><path d="M2 1L5.5 4" fill="none" stroke="#909090" stroke-width="0.8"/></svg>
<div class="t" style="left:16px;top:1046.2px;font-size:13px;letter-spacing:-0.25px">PgUp/Dn=Subscreens</div>
<div class="a" style="left:0px;top:1059px;width:1920px;height:1px;background:#b0b0b0;"></div>
<div class="a" style="left:0px;top:1060px;width:1920px;height:1px;background:#fff;"></div>
<div class="a" style="left:1289px;top:1064px;width:124px;height:15px;border-top:1px solid #a0a0a0;border-left:1px solid #a0a0a0;border-right:1px solid #fff"></div>
<div class="a" style="left:1417px;top:1064px;width:119px;height:15px;border-top:1px solid #a0a0a0;border-left:1px solid #a0a0a0;border-right:1px solid #fff"></div>
<div class="t" style="left:1418px;top:1066px;font-size:12.3px;">Record Viewed</div>
<div class="a" style="left:1539px;top:1064px;width:75px;height:15px;border-top:1px solid #a0a0a0;border-left:1px solid #a0a0a0;border-right:1px solid #fff"></div>
<div class="t" style="left:1540px;top:1066px;font-size:12.3px;">PTSSPCS0</div>
<div class="a" style="left:1618px;top:1064px;width:89px;height:15px;border-top:1px solid #a0a0a0;border-left:1px solid #a0a0a0;border-right:1px solid #fff"></div>
<div class="t" style="left:1619px;top:1066px;font-size:12.3px;">PPD3</div>
<div class="a" style="left:1711px;top:1064px;width:74px;height:15px;border-top:1px solid #a0a0a0;border-left:1px solid #a0a0a0;border-right:1px solid #fff"></div>
<div class="t" style="left:1712px;top:1066px;font-size:12.3px;">27/PARTS01</div>
<div class="a" style="left:1788px;top:1064px;width:65px;height:15px;border-top:1px solid #a0a0a0;border-left:1px solid #a0a0a0;border-right:1px solid #fff"></div>
<div class="t" style="left:1789px;top:1066px;font-size:12.3px;">D44/80069</div>
<div class="a" style="left:1857px;top:1064px;width:29px;height:15px;border-top:1px solid #a0a0a0;border-left:1px solid #a0a0a0;border-right:1px solid #fff"></div>
<div class="t" style="left:1858px;top:1066px;font-size:12.3px;">OVR</div>
<div class="a" style="left:1890px;top:1064px;width:30px;height:15px;border-top:1px solid #a0a0a0;border-left:1px solid #a0a0a0;overflow:hidden"><div class="t" style="left:1px;top:2px;font-size:12.3px">5069</div></div>
<div class="a" style="left:0px;top:1078px;width:1920px;height:2px;background:#1a1a1a;"></div>
<!-- MENUS -->
<div class="a" style="left:1132px;top:166px;width:4px;height:267px;background:linear-gradient(90deg,rgba(0,0,0,0.35),rgba(0,0,0,0.04));"></div>
<div class="a" style="left:939px;top:429px;width:193px;height:4px;background:linear-gradient(rgba(0,0,0,0.35),rgba(0,0,0,0.04));"></div>
<div class="a" style="left:935px;top:159px;width:197px;height:270px;background:#d4d0c8;border:1px solid #a0a0a0"></div>
<div class="t" style="left:962px;top:167.5px;font-size:12.7px;color:#000">Print</div>
<div class="t" style="left:962px;top:190.5px;font-size:12.7px;color:#9c8c8c">Move Column</div>
<div class="t" style="left:962px;top:213.5px;font-size:12.7px;color:#000">Freeze Column(s)</div>
<svg class="a" style="left:1117px;top:213.5px" width="5" height="9" viewBox="0 0 5 9"><path d="M0 0L4.5 4.5L0 9Z" fill="#000"/></svg>
<div class="t" style="left:962px;top:236.5px;font-size:12.7px;color:#000">Sort</div>
<svg class="a" style="left:1117px;top:236.5px" width="5" height="9" viewBox="0 0 5 9"><path d="M0 0L4.5 4.5L0 9Z" fill="#000"/></svg>
<div class="t" style="left:962px;top:259.5px;font-size:12.7px;color:#000">Expand All Rows</div>
<div class="t" style="left:962px;top:282.5px;font-size:12.7px;color:#000">Collapse All Rows</div>
<div class="t" style="left:962px;top:305.5px;font-size:12.7px;color:#000">Alternate Line Shading</div>
<svg class="a" style="left:945px;top:306.5px" width="8" height="8" viewBox="0 0 8 8"><path d="M0.8 3.6L2.8 5.8L7 1.2" fill="none" stroke="#000" stroke-width="1.9"/></svg>
<div class="t" style="left:962px;top:328.5px;font-size:12.7px;color:#000">Summary Grouping</div>
<svg class="a" style="left:945px;top:329.5px" width="8" height="8" viewBox="0 0 8 8"><path d="M0.8 3.6L2.8 5.8L7 1.2" fill="none" stroke="#000" stroke-width="1.9"/></svg>
<div class="t" style="left:962px;top:351.5px;font-size:12.7px;color:#000">Grid Lines</div>
<svg class="a" style="left:1117px;top:351.5px" width="5" height="9" viewBox="0 0 5 9"><path d="M0 0L4.5 4.5L0 9Z" fill="#000"/></svg>
<div class="a" style="left:937px;top:372px;width:193px;height:1px;background:#a0a0a0;"></div>
<div class="a" style="left:937px;top:373px;width:193px;height:1px;background:#fff;"></div>
<div class="t" style="left:962px;top:381.0px;font-size:12.7px;color:#000">Default Settings</div>
<div class="a" style="left:937px;top:401px;width:193px;height:1px;background:#a0a0a0;"></div>
<div class="a" style="left:937px;top:402px;width:193px;height:1px;background:#fff;"></div>
<div class="a" style="left:938px;top:404px;width:190px;height:23px;background:linear-gradient(#0b2068 0%,#2a3e94 30%,#4d60c0 60%,#8090e8 100%);border:1px solid #5a60f0"></div>
<div class="t" style="left:962px;top:410.0px;font-size:12.7px;color:#fff">Column(s)</div>
<svg class="a" style="left:1117px;top:410px" width="5" height="9" viewBox="0 0 5 9"><path d="M0 0L4.5 4.5L0 9Z" fill="#fff"/></svg>
<div class="a" style="left:938px;top:405px;width:4px;height:673px;background:linear-gradient(90deg,rgba(0,0,0,0.35),rgba(0,0,0,0.04));"></div>
<div class="a" style="left:773px;top:1074px;width:165px;height:4px;background:linear-gradient(rgba(0,0,0,0.35),rgba(0,0,0,0.04));"></div>
<div class="a" style="left:769px;top:401px;width:169px;height:673px;background:#d4d0c8;border:1px solid #a0a0a0"></div>
<div class="t" style="left:796px;top:409.5px;font-size:12.7px;color:#000">LN#</div>
<svg class="a" style="left:778.5px;top:410.5px" width="8" height="8" viewBox="0 0 8 8"><path d="M0.8 3.6L2.8 5.8L7 1.2" fill="none" stroke="#000" stroke-width="1.9"/></svg>
<div class="t" style="left:796px;top:432.5px;font-size:12.7px;color:#000">Ctr#</div>
<svg class="a" style="left:778.5px;top:433.5px" width="8" height="8" viewBox="0 0 8 8"><path d="M0.8 3.6L2.8 5.8L7 1.2" fill="none" stroke="#000" stroke-width="1.9"/></svg>
<div class="a" style="left:772px;top:450px;width:163px;height:23px;background:linear-gradient(#0b2068 0%,#2a3e94 30%,#4d60c0 60%,#8090e8 100%);border:1px solid #5a60f0"></div>
<div class="t" style="left:796px;top:455.5px;font-size:12.7px;color:#fff">Tech#</div>
<div class="t" style="left:796px;top:478.5px;font-size:12.7px;color:#000">Make</div>
<svg class="a" style="left:778.5px;top:479.5px" width="8" height="8" viewBox="0 0 8 8"><path d="M0.8 3.6L2.8 5.8L7 1.2" fill="none" stroke="#000" stroke-width="1.9"/></svg>
<div class="t" style="left:796px;top:501.5px;font-size:12.7px;color:#000">Part#</div>
<svg class="a" style="left:778.5px;top:502.5px" width="8" height="8" viewBox="0 0 8 8"><path d="M0.8 3.6L2.8 5.8L7 1.2" fill="none" stroke="#000" stroke-width="1.9"/></svg>
<div class="t" style="left:796px;top:524.5px;font-size:12.7px;color:#000">QORD</div>
<svg class="a" style="left:778.5px;top:525.5px" width="8" height="8" viewBox="0 0 8 8"><path d="M0.8 3.6L2.8 5.8L7 1.2" fill="none" stroke="#000" stroke-width="1.9"/></svg>
<div class="t" style="left:796px;top:547.5px;font-size:12.7px;color:#000">Description</div>
<svg class="a" style="left:778.5px;top:548.5px" width="8" height="8" viewBox="0 0 8 8"><path d="M0.8 3.6L2.8 5.8L7 1.2" fill="none" stroke="#000" stroke-width="1.9"/></svg>
<div class="t" style="left:796px;top:570.5px;font-size:12.7px;color:#000">QSHP</div>
<svg class="a" style="left:778.5px;top:571.5px" width="8" height="8" viewBox="0 0 8 8"><path d="M0.8 3.6L2.8 5.8L7 1.2" fill="none" stroke="#000" stroke-width="1.9"/></svg>
<div class="t" style="left:796px;top:593.5px;font-size:12.7px;color:#000">Job#</div>
<div class="t" style="left:796px;top:616.5px;font-size:12.7px;color:#000">TC</div>
<svg class="a" style="left:778.5px;top:617.5px" width="8" height="8" viewBox="0 0 8 8"><path d="M0.8 3.6L2.8 5.8L7 1.2" fill="none" stroke="#000" stroke-width="1.9"/></svg>
<div class="t" style="left:796px;top:639.5px;font-size:12.7px;color:#000">Comment</div>
<svg class="a" style="left:778.5px;top:640.5px" width="8" height="8" viewBox="0 0 8 8"><path d="M0.8 3.6L2.8 5.8L7 1.2" fill="none" stroke="#000" stroke-width="1.9"/></svg>
<div class="t" style="left:796px;top:662.5px;font-size:12.7px;color:#000">Tech Name</div>
<div class="t" style="left:796px;top:685.5px;font-size:12.7px;color:#000">CWI</div>
<div class="t" style="left:796px;top:708.5px;font-size:12.7px;color:#000">Opcode Desc</div>
<div class="t" style="left:796px;top:731.5px;font-size:12.7px;color:#000">List</div>
<div class="t" style="left:796px;top:754.5px;font-size:12.7px;color:#000">Sell</div>
<svg class="a" style="left:778.5px;top:755.5px" width="8" height="8" viewBox="0 0 8 8"><path d="M0.8 3.6L2.8 5.8L7 1.2" fill="none" stroke="#000" stroke-width="1.9"/></svg>
<div class="t" style="left:796px;top:777.5px;font-size:12.7px;color:#000">Core</div>
<svg class="a" style="left:778.5px;top:778.5px" width="8" height="8" viewBox="0 0 8 8"><path d="M0.8 3.6L2.8 5.8L7 1.2" fill="none" stroke="#000" stroke-width="1.9"/></svg>
<div class="t" style="left:796px;top:800.5px;font-size:12.7px;color:#000">Cost</div>
<svg class="a" style="left:778.5px;top:801.5px" width="8" height="8" viewBox="0 0 8 8"><path d="M0.8 3.6L2.8 5.8L7 1.2" fill="none" stroke="#000" stroke-width="1.9"/></svg>
<div class="t" style="left:796px;top:823.5px;font-size:12.7px;color:#000">Ext Sell</div>
<svg class="a" style="left:778.5px;top:824.5px" width="8" height="8" viewBox="0 0 8 8"><path d="M0.8 3.6L2.8 5.8L7 1.2" fill="none" stroke="#000" stroke-width="1.9"/></svg>
<div class="t" style="left:796px;top:846.5px;font-size:12.7px;color:#000">Ext Cost</div>
<div class="t" style="left:796px;top:869.5px;font-size:12.7px;color:#000">GP%</div>
<svg class="a" style="left:778.5px;top:870.5px" width="8" height="8" viewBox="0 0 8 8"><path d="M0.8 3.6L2.8 5.8L7 1.2" fill="none" stroke="#000" stroke-width="1.9"/></svg>
<div class="t" style="left:796px;top:892.5px;font-size:12.7px;color:#000">PL</div>
<svg class="a" style="left:778.5px;top:893.5px" width="8" height="8" viewBox="0 0 8 8"><path d="M0.8 3.6L2.8 5.8L7 1.2" fill="none" stroke="#000" stroke-width="1.9"/></svg>
<div class="t" style="left:796px;top:915.5px;font-size:12.7px;color:#000">Comp</div>
<div class="t" style="left:796px;top:938.5px;font-size:12.7px;color:#000">Bin</div>
<svg class="a" style="left:778.5px;top:939.5px" width="8" height="8" viewBox="0 0 8 8"><path d="M0.8 3.6L2.8 5.8L7 1.2" fill="none" stroke="#000" stroke-width="1.9"/></svg>
<div class="t" style="left:796px;top:961.5px;font-size:12.7px;color:#000">AON</div>
<div class="t" style="left:796px;top:984.5px;font-size:12.7px;color:#000">AOA Vendor</div>
<div class="t" style="left:796px;top:1007.5px;font-size:12.7px;color:#000">AOA Part Number</div>
<div class="t" style="left:796px;top:1030.5px;font-size:12.7px;color:#000">DMS Export#</div>
<div class="t" style="left:796px;top:1053.5px;font-size:12.7px;color:#000">Trade</div>
<svg class="a" style="left:851px;top:476px" width="13" height="20" viewBox="0 0 13 20"><path d="M0.5 0.5V16.5L4.3 12.8L6.8 18.8L9.3 17.8L6.8 11.8H11.8Z" fill="#fff" stroke="#000" stroke-width="1" stroke-linejoin="miter"/></svg>
</body></html>
